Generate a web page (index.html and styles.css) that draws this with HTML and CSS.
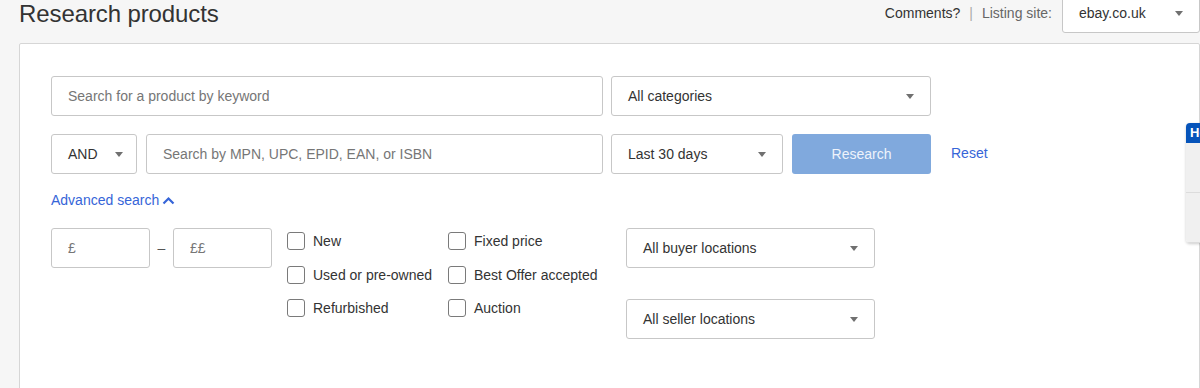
FILE: index.html
```html
<!DOCTYPE html>
<html lang="en">
<head>
    <meta charset="UTF-8">
    <title>Research products</title>
    <link rel="stylesheet" href="styles.css">
</head>
<body>
    <div class="page">
        <header class="top">
            <h1>Research products</h1>
            <div class="site">
                <a class="comments" href="#">Comments?</a>
                <span class="sep">|</span>
                <span class="site-label">Listing site:</span>
                <div class="select site-select">ebay.co.uk<span class="caret"></span></div>
            </div>
        </header>

        <div class="card">
            <div class="row">
                <input class="field keyword" type="text" placeholder="Search for a product by keyword">
                <div class="select categories">All categories<span class="caret"></span></div>
            </div>

            <div class="row row-second">
                <div class="select and">AND<span class="caret"></span></div>
                <input class="field mpn" type="text" placeholder="Search by MPN, UPC, EPID, EAN, or ISBN">
                <div class="select days">Last 30 days<span class="caret"></span></div>
                <button class="research">Research</button>
                <a class="reset" href="#">Reset</a>
            </div>

            <a class="advanced" href="#">Advanced search
                <svg width="13" height="9" viewBox="0 0 13 9"><path d="M1.5 7.5 L6.5 2.5 L11.5 7.5" fill="none" stroke="#3665d8" stroke-width="2.2"/></svg>
            </a>

            <div class="filters">
                <div class="price">
                    <input class="field price-box" type="text" placeholder="£">
                    <span class="dash">–</span>
                    <input class="field price-box" type="text" placeholder="££">
                </div>

                <div class="checks checks-condition">
                    <label class="check"><input type="checkbox"> New</label>
                    <label class="check"><input type="checkbox"> Used or pre-owned</label>
                    <label class="check"><input type="checkbox"> Refurbished</label>
                </div>

                <div class="checks checks-format">
                    <label class="check"><input type="checkbox"> Fixed price</label>
                    <label class="check"><input type="checkbox"> Best Offer accepted</label>
                    <label class="check"><input type="checkbox"> Auction</label>
                </div>

                <div class="locations">
                    <div class="select location">All buyer locations<span class="caret"></span></div>
                    <div class="select location">All seller locations<span class="caret"></span></div>
                </div>
            </div>
        </div>
    </div>

    <!-- side tab sticking in from the right -->
    <div class="side-panel">
        <div class="side-head">Help</div>
        <div class="side-item"></div>
        <div class="side-item"></div>
    </div>
</body>
</html>
```

FILE: styles.css
```css
body {
    margin: 0;
    font-family: 'Liberation Sans', Arial, sans-serif;
    font-size: 14px;
    color: #333;
    background-color: #f6f6f6;
    overflow: hidden;
}

.page {
    padding-left: 19px;
}

.top {
    display: flex;
    justify-content: space-between;
    height: 43px;
}

h1 {
    margin: 0;
    font-size: 24px;
    line-height: 28px;
    font-weight: normal;
    color: #333;
    letter-spacing: -0.1px;
}

.site {
    display: flex;
    align-items: flex-start;
    line-height: 27px;
}

.comments {
    color: #333;
    text-decoration: none;
}

.sep {
    color: #aaa;
    margin: 0 9px;
}

.site-label {
    color: #666;
    margin-right: 10px;
}

.site-select {
    margin-top: -7px;
    width: 138px;
    border-right: none;
    border-radius: 3px 0 0 3px;
}

.card {
    background-color: #fff;
    border: 1px solid #d6d6d6;
    border-radius: 2px;
    padding: 32px 31px 0;
    height: 400px;
    box-sizing: border-box;
}

.row {
    display: flex;
    align-items: center;
}

.row-second {
    margin-top: 18px;
}

.field {
    height: 40px;
    box-sizing: border-box;
    border: 1px solid #c7c7c7;
    border-radius: 3px;
    padding: 0 16px;
    font-family: inherit;
    font-size: 14px;
    color: #333;
    outline: none;
}

.field::placeholder {
    color: #767676;
}

.select {
    position: relative;
    height: 40px;
    box-sizing: border-box;
    border: 1px solid #c7c7c7;
    border-radius: 3px;
    padding: 0 16px;
    line-height: 38px;
    color: #333;
    background-color: #fff;
}

.caret {
    position: absolute;
    right: 16px;
    top: 17px;
    width: 0;
    height: 0;
    border-left: 4px solid transparent;
    border-right: 4px solid transparent;
    border-top: 5px solid #707070;
}

.keyword {
    width: 552px;
}

.categories {
    width: 320px;
    margin-left: 8px;
}

.and {
    width: 86px;
}

.and .caret {
    right: 13px;
}

.mpn {
    width: 457px;
    margin-left: 9px;
}

.days {
    width: 172px;
    margin-left: 8px;
}

.research {
    width: 139px;
    height: 40px;
    margin-left: 9px;
    border: none;
    border-radius: 3px;
    background-color: #80a9dd;
    color: #eef3fb;
    font-family: inherit;
    font-size: 14px;
}

.reset {
    margin-left: 20px;
    margin-top: -3px;
    color: #3665d8;
    text-decoration: none;
}

.advanced {
    display: inline-flex;
    align-items: center;
    gap: 3px;
    margin-top: 16px;
    line-height: 20px;
    color: #3665d8;
    text-decoration: none;
}

.filters {
    display: flex;
    align-items: flex-start;
    margin-top: 18px;
}

.price {
    display: flex;
    align-items: center;
    flex-shrink: 0;
}

.price-box {
    width: 99px;
}

.dash {
    width: 23px;
    text-align: center;
    color: #555;
}

.checks {
    display: flex;
    flex-direction: column;
    padding-top: 4px;
    gap: 15.5px;
    flex-shrink: 0;
}

.checks-condition {
    margin-left: 15px;
    width: 161px;
}

.checks-format {
    width: 178px;
}

.check {
    display: flex;
    align-items: center;
    height: 18px;
    gap: 8px;
    white-space: nowrap;
}

.check input {
    appearance: none;
    margin: 0;
    width: 18px;
    height: 18px;
    border: 1px solid #7a7a7a;
    border-radius: 3px;
    background-color: #fff;
}

.locations {
    display: flex;
    flex-direction: column;
    gap: 31px;
    flex-shrink: 0;
}

.location {
    width: 249px;
}

.side-panel {
    position: absolute;
    left: 1186px;
    top: 123px;
    width: 60px;
    border-radius: 4px 0 0 4px;
    overflow: hidden;
    box-shadow: 0 1px 3px rgba(0, 0, 0, 0.2);
}

.side-head {
    height: 20px;
    background-color: #0654ba;
    color: #fff;
    font-size: 13px;
    font-weight: bold;
    line-height: 20px;
    padding-left: 4px;
}

.side-item {
    height: 49px;
    background-color: #f0f0f0;
    border-bottom: 1px solid #dcdcdc;
}
```
